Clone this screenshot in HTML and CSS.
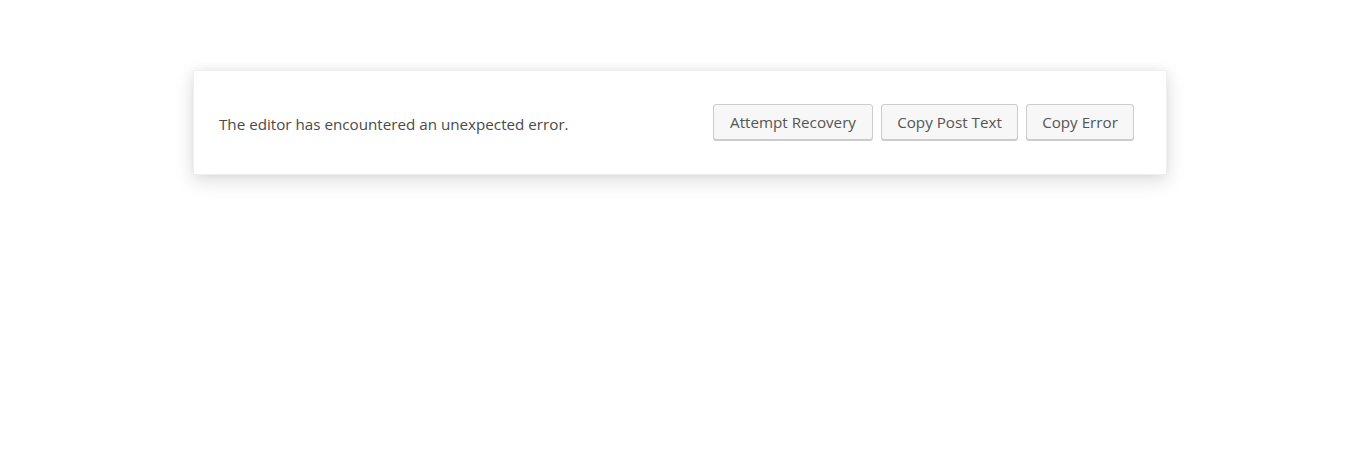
FILE: index.html
```
<!DOCTYPE html>
<html>
<head>
<meta charset="utf-8">
<link rel="stylesheet" href="styles.css">
</head>
<body>
<div class="page">
  <div class="notice">
    <p class="message">The editor has encountered an unexpected error.</p>
    <div class="actions">
      <button class="btn btn-recovery">Attempt Recovery</button>
      <button class="btn btn-copy-post">Copy Post Text</button>
      <button class="btn btn-copy-error">Copy Error</button>
    </div>
  </div>
</div>
</body>
</html>
```
FILE: styles.css
```
html, body {
  margin: 0;
  padding: 0;
  background: #ffffff;
}
body {
  font-family: "Open Sans", "Noto Sans", sans-serif;
  color: #444;
  min-height: 452px;
}
.page {
  padding-top: 70px;
  padding-left: 193px;
  width: 974px;
}
.notice {
  height: 105px;
  box-sizing: border-box;
  background: #fff;
  border: 1px solid #efefef;
  box-shadow: 0 6px 18px rgba(25, 30, 35, 0.14), 0 0 10px rgba(25, 30, 35, 0.05);
  display: flex;
  align-items: center;
  justify-content: space-between;
  padding: 0 32px 0 25px;
}
.message {
  margin: 0;
  font-size: 15.2px;
  color: #4a4a4a;
  position: relative;
  top: 1px;
}
.actions {
  display: flex;
  gap: 8px;
  position: relative;
  top: -1px;
}
.btn {
  font-family: "Open Sans", "Noto Sans", sans-serif;
  font-size: 15.2px;
  color: #555;
  background: #f7f7f7;
  border: 1px solid #ccc;
  border-radius: 3px;
  box-shadow: 0 1px 0 #ccc;
  height: 36px;
  padding: 0 4px;
  margin: 0;
  cursor: pointer;
  white-space: nowrap;
}
.btn-recovery { width: 160px; }
.btn-copy-post { width: 137px; }
.btn-copy-error { width: 108px; }
```
